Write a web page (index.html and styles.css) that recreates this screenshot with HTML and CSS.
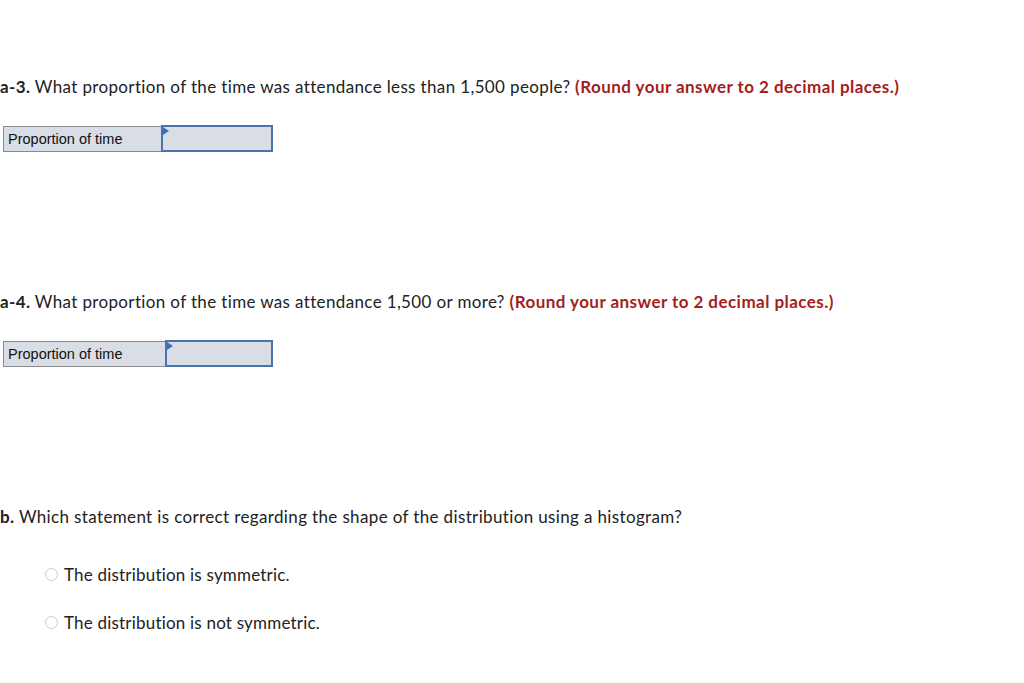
FILE: index.html
```html
<!DOCTYPE html>
<html lang="en">
<head>
    <meta charset="UTF-8">
    <title>Question</title>
    <link rel="stylesheet" href="styles.css">
</head>
<body>
    <div class="part part-a3">
        <p class="question"><b>a-3.</b> What proportion of the time was attendance less than 1,500 people? <span class="hint">(Round your answer to 2 decimal places.)</span></p>
        <table class="answer-table">
            <tr>
                <td class="label">Proportion of time</td>
                <td class="input"><span class="flag"></span></td>
            </tr>
        </table>
    </div>

    <div class="part part-a4">
        <p class="question"><b>a-4.</b> What proportion of the time was attendance 1,500 or more? <span class="hint">(Round your answer to 2 decimal places.)</span></p>
        <table class="answer-table wide-label">
            <tr>
                <td class="label">Proportion of time</td>
                <td class="input"><span class="flag"></span></td>
            </tr>
        </table>
    </div>

    <div class="part part-b">
        <p class="question"><b>b.</b> Which statement is correct regarding the shape of the distribution using a histogram?</p>
        <ul class="choices">
            <li><span class="radio"></span>The distribution is symmetric.</li>
            <li><span class="radio"></span>The distribution is not symmetric.</li>
        </ul>
    </div>
</body>
</html>
```

FILE: styles.css
```css
body {
    margin: 0;
    padding-top: 76px;
    font-family: Lato, "Open Sans", sans-serif;
    color: #222;
    background-color: #fff;
}

.question {
    margin: 0;
    font-size: 17px;
    line-height: 22px;
    letter-spacing: 0.36px;
}

.question b {
    font-weight: 700;
}

.hint {
    color: #a41d1d;
    font-weight: 700;
    letter-spacing: 0.45px;
}

.part-a3 {
    height: 215px;
}

.part-a4 {
    height: 215px;
}

.answer-table {
    margin: 27px 0 0 3px;
    border-collapse: collapse;
    font-family: "Liberation Sans", Arial, sans-serif;
    font-size: 14.5px;
    color: #111;
}

.answer-table td {
    height: 23px;
    padding: 0;
    background-color: #d9dde6;
    border: 1px solid #8a8a8a;
}

.answer-table .label {
    width: 153px;
    padding-left: 4px;
}

.wide-label .label {
    width: 157px;
}

.answer-table .input {
    position: relative;
    width: 108px;
    border: 2px solid #4a72ad;
}

.wide-label .input {
    width: 104px;
}

.flag {
    position: absolute;
    top: 0;
    left: 0;
    width: 0;
    height: 0;
    border-top: 4px solid transparent;
    border-bottom: 4px solid transparent;
    border-left: 6px solid #3d6fc0;
}

.choices {
    list-style: none;
    margin: 35px 0 0 45px;
    padding: 0;
    font-size: 17px;
    letter-spacing: 0.2px;
}

.choices li {
    display: flex;
    align-items: center;
    height: 22px;
    margin-bottom: 26px;
}

.radio {
    width: 11px;
    height: 11px;
    margin-right: 6px;
    border: 1px solid #ccc;
    border-radius: 50%;
}
```
